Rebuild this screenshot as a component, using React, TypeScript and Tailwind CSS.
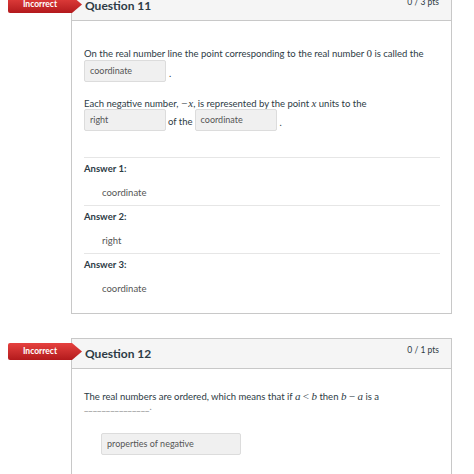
import React from "react";

const font = { fontFamily: "Lato, 'Noto Sans', sans-serif" };

function Badge({ top }: { top: string }) {
  return (
    <div
      className={`absolute left-[-64px] ${top} z-10 flex h-[17px] w-[74px] items-center rounded-l-[2px] bg-gradient-to-b from-[#e6413f] to-[#b3191c] pr-[10px] [clip-path:polygon(0_0,calc(100%-10px)_0,100%_50%,calc(100%-10px)_100%,0_100%)]`}
    >
      <span className="w-full text-center text-[8.5px] font-bold leading-none text-white">Incorrect</span>
    </div>
  );
}

function Box({ text, w }: { text: string; w: string }) {
  return (
    <div className={`flex h-[22px] ${w} items-center rounded-[2px] border border-[#dcdcdc] bg-[#f0f0f0] pl-[5px] text-[9px] text-[#555]`}>
      {text}
    </div>
  );
}

const M = ({ children, i = true }: { children: React.ReactNode; i?: boolean }) => (
  <span
    className={`${i ? "italic" : ""} text-[11px]`}
    style={{ fontFamily: "'Liberation Serif', 'DejaVu Serif', serif" }}
  >
    {children}
  </span>
);

function Answer({ n, v, last }: { n: number; v: string; last?: boolean }) {
  return (
    <div className={`border-t border-[#e6e6e6] pt-[3px] ${last ? "pb-[16px]" : "pb-[4px]"}`}>
      <div className="h-[16px] text-[9.5px] font-bold leading-[16px] text-[#2d3b45]">Answer {n}:</div>
      <div className="mt-2 h-[16px] pl-[18px] text-[9.5px] leading-[16px] text-[#555]">{v}</div>
    </div>
  );
}

export default function App() {
  return (
    <div className="h-[474px] w-[474px] overflow-hidden bg-white" style={font}>
      <div className="ml-[71px] mt-[-10px] flex w-[381px] flex-col">
        {/* Question 11 */}
        <div className="relative border border-[#c8c8c8] bg-white">
          <Badge top="top-[5px]" />
          <div className="flex h-[30px] items-start justify-between border-b border-[#c8c8c8] bg-[#f5f5f5] pl-[13px] pr-[12px]">
            <span className="mt-[6px] text-[12px] font-bold leading-[18px] text-[#2d3b45]">Question 11</span>
            <span className="mt-[5px] text-[8.5px] leading-[12px] text-[#2d3b45]">0 / 3 pts</span>
          </div>
          <div className="pl-[12px] pr-[11px] pt-[24px] text-[9.5px] text-[#2d3b45]">
            <p className="h-[16px] leading-[16px]">
              On the real number line the point corresponding to the real number <M i={false}>0</M> is called the
            </p>
            <div className="-mt-px flex items-center gap-[3px]">
              <Box text="coordinate" w="w-[82px]" />
              <span className="mt-[6px]">.</span>
            </div>
            <p className="mt-[13px] h-[16px] leading-[16px]">
              Each negative number, <M>−x</M>, is represented by the point <M>x</M> units to the
            </p>
            <div className="-mt-[2px] flex items-center gap-[2px]">
              <Box text="right" w="w-[82px]" />
              <span className="mt-[4px]">of the</span>
              <Box text="coordinate" w="w-[82px]" />
              <span className="ml-[1px] mt-[6px]">.</span>
            </div>
            <div className="mt-[26px]">
              <Answer n={1} v="coordinate" />
              <Answer n={2} v="right" />
              <Answer n={3} v="coordinate" last />
            </div>
          </div>
        </div>

        {/* Question 12 */}
        <div className="relative mt-[24px] border border-[#c8c8c8] bg-white">
          <Badge top="top-[4px]" />
          <div className="flex h-[30px] items-start justify-between border-b border-[#c8c8c8] bg-[#f5f5f5] pl-[13px] pr-[12px]">
            <span className="mt-[6px] text-[12px] font-bold leading-[18px] text-[#2d3b45]">Question 12</span>
            <span className="mt-[5px] text-[8.5px] leading-[12px] text-[#2d3b45]">0 / 1 pts</span>
          </div>
          <div className="pl-[12px] pr-[11px] pt-[19px] text-[9.5px] text-[#2d3b45]">
            <p className="h-[16px] leading-[16px]">
              The real numbers are ordered, which means that if <M>a</M> <M i={false}>&lt;</M> <M>b</M> then{" "}
              <M>b</M> <M i={false}>−</M> <M>a</M> is a
            </p>
            <p className="-mt-[5px] h-[16px] leading-[16px] text-[#8a8a8a]">_______________.</p>
            <div className="mt-[18px] pl-[17px] pb-[40px]">
              <Box text="properties of negative" w="w-[140px]" />
            </div>
          </div>
        </div>
      </div>
    </div>
  );
}
